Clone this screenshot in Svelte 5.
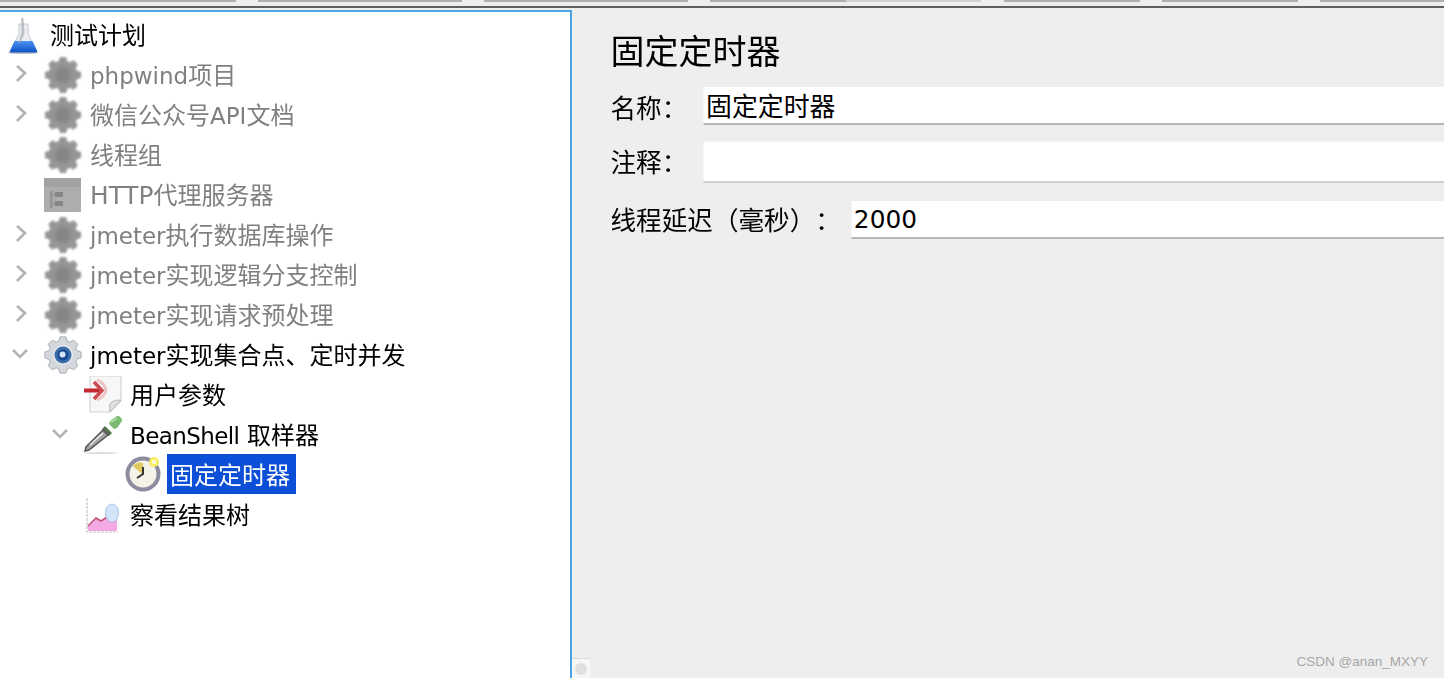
<script lang="ts">
	type Icon = 'flask' | 'gear' | 'gearOn' | 'proxy' | 'params' | 'dropper' | 'timer' | 'chart';

	interface Node {
		label: string;
		icon: Icon;
		depth: number;
		arrow?: 'right' | 'down';
		muted?: boolean;
		selected?: boolean;
	}

	const nodes: Node[] = [
		{ label: '测试计划', icon: 'flask', depth: 0 },
		{ label: 'phpwind项目', icon: 'gear', depth: 1, arrow: 'right', muted: true },
		{ label: '微信公众号API文档', icon: 'gear', depth: 1, arrow: 'right', muted: true },
		{ label: '线程组', icon: 'gear', depth: 1, muted: true },
		{ label: 'HTTP代理服务器', icon: 'proxy', depth: 1, muted: true },
		{ label: 'jmeter执行数据库操作', icon: 'gear', depth: 1, arrow: 'right', muted: true },
		{ label: 'jmeter实现逻辑分支控制', icon: 'gear', depth: 1, arrow: 'right', muted: true },
		{ label: 'jmeter实现请求预处理', icon: 'gear', depth: 1, arrow: 'right', muted: true },
		{ label: 'jmeter实现集合点、定时并发', icon: 'gearOn', depth: 1, arrow: 'down' },
		{ label: '用户参数', icon: 'params', depth: 2 },
		{ label: 'BeanShell 取样器', icon: 'dropper', depth: 2, arrow: 'down' },
		{ label: '固定定时器', icon: 'timer', depth: 3, selected: true },
		{ label: '察看结果树', icon: 'chart', depth: 2 },
	];

	// top strip left over from the crop: [width, shade]
	const strip = [
		{ w: 236, c: '#b0b0b0' },
		{ w: 22, c: 'transparent' },
		{ w: 204, c: '#b0b0b0' },
		{ w: 22, c: 'transparent' },
		{ w: 204, c: '#b0b0b0' },
		{ w: 22, c: 'transparent' },
		{ w: 136, c: '#b0b0b0' },
		{ w: 135, c: '#d2d2d2' },
		{ w: 23, c: 'transparent' },
		{ w: 136, c: '#b0b0b0' },
		{ w: 22, c: 'transparent' },
		{ w: 136, c: '#b0b0b0' },
		{ w: 22, c: 'transparent' },
		{ w: 124, c: '#b0b0b0' },
	];

	// the Latin runs are a touch narrower than the CJK ones in the original font
	const splitLabel = (text: string) =>
		text.split(/([A-Za-z]+(?: (?=[A-Za-z]))?)/).filter(Boolean).map((part) => ({
			part,
			latin: /^[A-Za-z]/.test(part),
			cls: part === 'HTTP' ? 'wide' : part === 'BeanShell' ? 'tight' : '',
		}));

	// 8-tooth cog around (19,19)
	const gearPath = (() => {
		const pts: string[] = [];
		for (let i = 0; i < 8; i++) {
			const a = (i * Math.PI) / 4 - Math.PI / 2;
			const step = [
				[-0.3, 14.5],
				[-0.16, 18.3],
				[0.16, 18.3],
				[0.3, 14.5],
			];
			for (const [da, r] of step) {
				pts.push(`${(19 + r * Math.cos(a + da)).toFixed(1)},${(19 + r * Math.sin(a + da)).toFixed(1)}`);
			}
		}
		return 'M' + pts.join('L') + 'Z';
	})();
</script>

{#snippet drawIcon(icon: Icon)}
	<svg class="icon" class:soft={icon === 'gear'} viewBox="0 0 38 40" width="38" height="40" aria-hidden="true">
		{#if icon === 'flask'}
			<defs>
				<linearGradient id="fluid" x1="0" y1="0" x2="0" y2="1">
					<stop offset="0" stop-color="#4a93f2" />
					<stop offset="1" stop-color="#0d4fc4" />
				</linearGradient>
			</defs>
			<ellipse cx="19" cy="36.500" rx="15" ry="1.600" fill="#b9bcc4" />
			<path d="M15 8h9v10l9 17q.5 1.500-1 1.500H7q-1.500 0-1-1.500l9-17z" fill="#eceef2" stroke="#c4c8d0" />
			<path d="M10.500 25h18l4.500 10q.5 1.500-1 1.500H7q-1.500 0-1-1.500z" fill="url(#fluid)" />
			<path d="M17 2h2.500l1 15-4 10h-2l3-11z" fill="#a9adb5" opacity=".7" />
		{:else if icon === 'gear' || icon === 'gearOn'}
			{#if icon === 'gear'}
				<path d={gearPath} fill="#969696" />
				<circle cx="19" cy="19" r="9" fill="#8c8c8c" />
				<circle cx="19" cy="19" r="6" fill="#858585" />
			{:else}
				<path d={gearPath} fill="#d4d7dc" stroke="#a8abb1" stroke-width="1" />
				<circle cx="19" cy="19" r="10" fill="#e6e9ef" />
				<circle cx="19" cy="19" r="8.500" fill="#3a6ca8" />
				<circle cx="19" cy="19" r="5.500" fill="#174a90" />
				<circle cx="18.500" cy="18.500" r="3" fill="#d5e4f6" />
			{/if}
		{:else if icon === 'proxy'}
			<rect x="0" y="2" width="37" height="34" fill="#adadad" />
			<rect x="0" y="2" width="37" height="9" fill="#a2a2a2" />
			<rect x="6" y="15" width="2.500" height="17" fill="#949494" />
			<rect x="11" y="16" width="8" height="5" fill="#858585" />
			<rect x="11" y="25" width="8" height="5" fill="#858585" />
			<rect x="8" y="18" width="3" height="1.500" fill="#949494" />
			<rect x="8" y="27" width="3" height="1.500" fill="#949494" />
		{:else if icon === 'params'}
			<path d="M6 0h31v25L26 36H6z" fill="#f7f7f7" stroke="#d4d4d4" stroke-width="1.200" />
			<path d="M37 24l-11 12c0-5-1-7.500 1-9.500 2-2 6-2.500 10-2.500z" fill="#e0e0e0" stroke="#b8b8b8" />
			<path d="M13 4c5 2 8 5 9 10-1 5-4 8-9 10" fill="none" stroke="#efc4c4" stroke-width="3" />
			<path d="M0 14.500h16" stroke="#c3282c" stroke-width="4" />
			<path d="M10 6l8 8.500-8 8.500" fill="none" stroke="#cf4a4e" stroke-width="3.500" />
		{:else if icon === 'dropper'}
			<ellipse cx="17" cy="37" rx="17" ry="1" fill="#dcdcdc" />
			<path d="M26 5l7-5c3 0 5 2 5 5l-5 7-3 1-5-5z" fill="#7dbb72" />
			<path d="M27 6l6-4" stroke="#acdca2" stroke-width="2" />
			<path d="M21 10l7 7-3 3-7-7z" fill="#55754e" />
			<path d="M19 14l5 5L5 34l-4 1 1-4z" fill="#a4a4a4" stroke="#565656" stroke-width="1.500" />
			<path d="M6 29l13-12" stroke="#ececec" stroke-width="1.500" />
		{:else if icon === 'timer'}
			<circle cx="19" cy="18" r="17.500" fill="#8d8ba0" />
			<circle cx="19" cy="18" r="13.500" fill="#f5f2e7" />
			<path d="M18 18L9 10q4-5 10-3z" fill="#e0c95e" />
			<path d="M19 11v7l-6 4" fill="none" stroke="#333" stroke-width="2" />
			<circle cx="30" cy="6" r="5" fill="#f7ee5a" />
			<circle cx="30" cy="6" r="2.500" fill="#fffbd0" />
		{:else}
			<path d="M3 2v34h31" fill="none" stroke="#c4c4c4" stroke-width="1.200" stroke-dasharray="3 1" />
			<path d="M4 35v-5l8-8 5 3 6-4 10 1v13z" fill="#f3a9e2" />
			<path d="M4 30l8-8 5 3 6-4 10 1" fill="none" stroke="#c6507a" stroke-width="1.600" />
			<ellipse cx="28" cy="17" rx="6.500" ry="9" fill="#d4e4f9" stroke="#aac4e8" />
		{/if}
	</svg>
{/snippet}

<div class="page">
	<div class="strip">
		{#each strip as seg}
			<span style="width:{seg.w}px;background:{seg.c}"></span>
		{/each}
	</div>
	<div class="rule"></div>

	<div class="main">
		<aside class="tree">
			{#each nodes as node}
				<div class="row" style="padding-left:{4 + node.depth * 40}px">
					{#if node.arrow}
						<svg class="arrow" viewBox="0 0 32 40" width="32" height="40" aria-hidden="true">
							{#if node.arrow === 'right'}
								<path d="M13 10l8 7-8 8" />
							{:else}
								<path d="M9 14l7 7 7-7" />
							{/if}
						</svg>
					{/if}
					{@render drawIcon(node.icon)}
					<span class="label" class:muted={node.muted} class:selected={node.selected}>
						{#each splitLabel(node.label) as seg}{#if seg.latin}<span class="latin {seg.cls}">{seg.part}</span>{:else}{seg.part}{/if}{/each}
					</span>
				</div>
			{/each}
		</aside>

		<section class="panel">
			<h1>固定定时器</h1>
			<div class="field first">
				<label for="name">名称：</label>
				<input id="name" value="固定定时器" readonly />
			</div>
			<div class="field second">
				<label for="note">注释：</label>
				<input id="note" value="" readonly />
			</div>
			<div class="field third">
				<label for="delay">线程延迟（毫秒）：</label>
				<input id="delay" class="num" value="2000" readonly />
			</div>
		</section>
	</div>

	<div class="grip"><span></span></div>
	<div class="mark">CSDN @anan_MXYY</div>
</div>

<style>
	:global(body) {
		margin: 0;
		background: #eeeeee;
		overflow: hidden;
	}
	.page {
		position: relative;
		width: 1444px;
		height: 678px;
		overflow: hidden;
		background: #eeeeee;
		font-family: 'DejaVu Sans', 'Noto Sans CJK SC', sans-serif;
		color: #000;
		text-spacing-trim: space-all;
	}
	.strip {
		display: flex;
		height: 2px;
	}
	.rule {
		height: 2px;
		margin-top: 4px;
		background: #5f5f5f;
	}
	.main {
		display: flex;
		height: 670px;
		margin-top: 2px;
	}
	.tree {
		box-sizing: border-box;
		width: 572px;
		flex: none;
		padding-top: 4px;
		background: #fff;
		border-top: 2px solid #4fa3e3;
		border-right: 2px solid #4fa3e3;
	}
	.row {
		display: flex;
		align-items: center;
		height: 40px;
		white-space: nowrap;
	}
	.arrow {
		flex: none;
		margin-left: -40px;
		margin-right: 8px;
	}
	.arrow path {
		fill: none;
		stroke: #b4b4b4;
		stroke-width: 2.6;
	}
	.icon {
		flex: none;
		filter: blur(0.5px);
	}
	.soft {
		filter: blur(0.8px);
	}
	.label {
		margin-left: 4px;
		padding: 0 5px 0 4px;
		height: 38px;
		line-height: 38px;
		font-size: 24px;
		filter: blur(0.3px);
	}
	.latin {
		font-size: 23px;
	}
	.wide {
		font-size: 24.800px;
	}
	.tight {
		letter-spacing: -0.600px;
	}
	.muted {
		color: #808080;
	}
	.selected {
		height: 40px;
		margin-top: -4px;
		margin-left: 5px;
		padding-left: 3px;
		padding-right: 6px;
		line-height: 44px;
		background: #0b4fd8;
		color: #fff;
	}
	.panel {
		flex: 1;
		min-width: 0;
		padding: 22px 0 0 38.500px;
	}
	h1 {
		margin: 0;
		height: 40px;
		line-height: 40px;
		font-size: 34px;
		font-weight: 400;
		filter: blur(0.3px);
	}
	.field {
		display: flex;
		align-items: center;
	}
	.field label {
		flex: none;
		box-sizing: border-box;
		padding-bottom: 2px;
		font-size: 25.600px;
		filter: blur(0.3px);
	}
	.first {
		margin-top: 15px;
	}
	.second {
		margin-top: 16px;
	}
	.third {
		margin-top: 17px;
	}
	.first label,
	.second label {
		width: 92.500px;
	}
	.first label {
		padding-bottom: 0;
	}
	.second label {
		padding-bottom: 4px;
	}
	.third label {
		margin-right: 10px;
	}
	input {
		flex: 1;
		min-width: 0;
		box-sizing: border-box;
		height: 38px;
		padding: 0 0 1px 2px;
		border: 0;
		border-bottom: 2px solid #b8b8b8;
		border-left: 1px solid #f8f8f8;
		background: #fff;
		outline: none;
		color: #000;
		font-family: inherit;
		font-size: 25.900px;
	}
	.second input {
		height: 42px;
		border-top: 2px solid #f8f8f8;
		border-bottom-color: #d0d0d0;
	}
	.num {
		padding: 1px 0 0 2px;
		font-size: 24.800px;
	}
	.grip {
		position: absolute;
		left: 572px;
		top: 658px;
		box-sizing: border-box;
		display: flex;
		align-items: center;
		justify-content: center;
		width: 18px;
		height: 20px;
		background: #f6f6f6;
		border-top: 1px solid #dcdcdc;
	}
	.grip span {
		width: 12px;
		height: 12px;
		border-radius: 50%;
		background: #e0e0e0;
	}
	.mark {
		position: absolute;
		right: 16px;
		top: 654px;
		font-family: 'Liberation Sans', sans-serif;
		font-size: 13.500px;
		color: #a6a6a6;
	}
</style>
